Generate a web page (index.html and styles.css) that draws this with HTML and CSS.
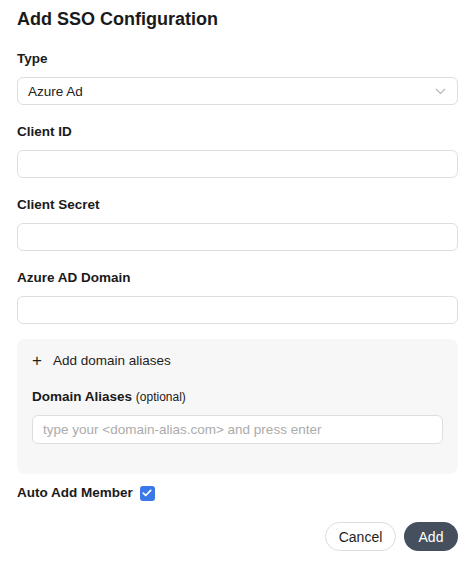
FILE: index.html
```html
<!DOCTYPE html>
<html>
<head>
<meta charset="utf-8">
<link rel="stylesheet" href="styles.css">
</head>
<body>
<div class="dialog">
  <h1 class="title">Add SSO Configuration</h1>
  <div class="fields">
    <div class="field">
      <label class="label">Type</label>
      <div class="select">
        <span>Azure Ad</span>
        <svg class="chev" width="11" height="7" viewBox="0 0 11 7"><path d="M1 1l4.5 4.5L10 1" fill="none" stroke="#b5b5b5" stroke-width="1.1"/></svg>
      </div>
    </div>
    <div class="field">
      <label class="label">Client ID</label>
      <div class="input"></div>
    </div>
    <div class="field">
      <label class="label">Client Secret</label>
      <div class="input"></div>
    </div>
    <div class="field">
      <label class="label">Azure AD Domain</label>
      <div class="input"></div>
    </div>
  </div>
  <div class="panel">
    <div class="add-row"><span class="plus">+</span><span>Add domain aliases</span></div>
    <label class="label">Domain Aliases <span class="opt">(optional)</span></label>
    <div class="input alias"><span class="ph">type your &lt;domain-alias.com&gt; and press enter</span></div>
  </div>
  <div class="auto-row">
    <span class="label">Auto Add Member</span>
    <span class="check"><svg width="10" height="8" viewBox="0 0 10 8"><path d="M1.3 4.2l2.4 2.3L8.7 1.4" fill="none" stroke="#fff" stroke-width="1.7" stroke-linecap="round" stroke-linejoin="round"/></svg></span>
  </div>
  <div class="actions">
    <button class="btn cancel">Cancel</button>
    <button class="btn add">Add</button>
  </div>
</div>
</body>
</html>
```
FILE: styles.css
```css
* { box-sizing: border-box; }
body {
  margin: 0;
  background: #fff;
  font-family: "Liberation Sans", Arial, sans-serif;
  color: #1c1c1c;
}
.dialog {
  padding: 7px 16px 0 17px;
  display: flex;
  flex-direction: column;
}
.title {
  margin: 0;
  font-size: 18px;
  line-height: 24px;
  font-weight: 700;
  color: #1a1a1a;
}
.fields {
  margin-top: 17px;
  display: flex;
  flex-direction: column;
  gap: 16px;
}
.field { display: flex; flex-direction: column; }
.label {
  display: block;
  font-size: 13.5px;
  line-height: 21px;
  font-weight: 700;
  color: #1a1a1a;
  margin-bottom: 8px;
}
.opt { font-weight: 400; font-size: 12px; }
.input, .select {
  height: 28px;
  border: 1px solid #dedede;
  border-radius: 6px;
  background: #fff;
}
.select {
  display: flex;
  align-items: center;
  justify-content: space-between;
  padding: 0 11px 0 10px;
  font-size: 13.5px;
  color: #222;
}
.panel {
  margin-top: 15px;
  background: #f7f7f7;
  border-radius: 8px;
  padding: 12px 15px 30px 15px;
  display: flex;
  flex-direction: column;
}
.add-row {
  display: flex;
  align-items: center;
  font-size: 13.5px;
  line-height: 20px;
  color: #1e1e1e;
  margin-bottom: 15px;
}
.plus { font-size: 17px; width: 21px; }
.panel .label { margin-bottom: 7px; }
.alias {
  height: 29px;
  display: flex;
  align-items: center;
  padding-left: 10px;
}
.ph { font-size: 13.5px; color: #ababab; }
.auto-row {
  margin-top: 9px;
  display: flex;
  align-items: center;
  gap: 7px;
}
.auto-row .label { margin: 0; line-height: 20px; }
.check {
  width: 15px;
  height: 15px;
  border-radius: 3px;
  background: #3b78e7;
  display: flex;
  align-items: center;
  justify-content: center;
}
.actions {
  margin-top: 19px;
  display: flex;
  justify-content: flex-end;
  gap: 8px;
}
.btn {
  height: 29px;
  border-radius: 15px;
  font-family: "Liberation Sans", Arial, sans-serif;
  font-size: 14px;
  cursor: pointer;
}
.cancel {
  width: 71px;
  background: #fff;
  border: 1px solid #dcdcdc;
  color: #1e1e1e;
}
.add {
  width: 54px;
  background: #454f5e;
  border: none;
  color: #fff;
}
```
